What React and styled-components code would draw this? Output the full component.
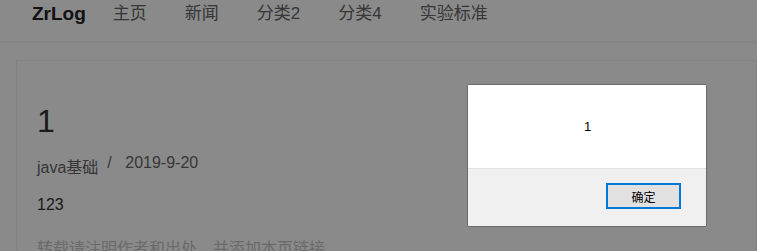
import React from "react";
import styled, { createGlobalStyle } from "styled-components";

const GlobalStyle = createGlobalStyle`
  html, body {
    margin: 0;
    padding: 0;
    background: #fff;
    font-family: "Liberation Sans", "Noto Sans CJK SC", Arial, sans-serif;
    overflow: hidden;
  }
`;

const Page = styled.div`
  width: 757px;
  height: 251px;
  position: relative;
  overflow: hidden;
`;

const Header = styled.header`
  height: 42px;
  box-sizing: border-box;
  display: flex;
  align-items: flex-start;
  padding: 4px 0 0 32px;
  line-height: 20px;
  border-bottom: 1px solid #f2f2f2;
  box-shadow: 0 1px 2px rgba(0, 0, 0, 0.05);
`;

const Brand = styled.a`
  font-size: 19px;
  font-weight: bold;
  color: #222;
  margin-right: 8px;
  text-decoration: none;
`;

const NavItem = styled.a`
  font-size: 17px;
  color: #666;
  padding: 0 19px;
  text-decoration: none;
`;

const Card = styled.article`
  margin: 18px 0 0 16px;
  border: 1px solid #f0f0f0;
  padding: 40px 20px 0 20px;
  height: 300px;
`;

const Title = styled.h1`
  margin: 0;
  font-size: 32px;
  font-weight: normal;
  color: #333;
  line-height: 40px;
`;

const Meta = styled.div`
  margin-top: 13px;
  font-size: 16px;
  color: #666;
  display: flex;
  gap: 9px;
`;

const Body = styled.p`
  margin: 18px 0 0;
  font-size: 16px;
  color: #333;
`;

const Notice = styled.p`
  margin: 21px 0 0;
  font-size: 16px;
  color: #c4c4c4;
`;

const Mask = styled.div`
  position: fixed;
  inset: 0;
  background: rgba(0, 0, 0, 0.46);
`;

const Dialog = styled.div`
  position: fixed;
  left: 467px;
  top: 84px;
  width: 240px;
  height: 143px;
  background: #f0f0f0;
  border: 1px solid #6b6b6b;
  border-radius: 2px;
  display: flex;
  flex-direction: column;
  box-sizing: border-box;
  overflow: hidden;
`;

const Message = styled.div`
  height: 83px;
  background: #fff;
  border-bottom: 1px solid #e2e2e2;
  display: flex;
  align-items: center;
  justify-content: center;
  font-size: 13px;
  color: #000;
  padding-left: 1px;
`;

const Actions = styled.div`
  flex: 1;
  display: flex;
  justify-content: flex-end;
  align-items: flex-start;
  padding: 14px 25px 0 0;
`;

const OkButton = styled.button`
  width: 75px;
  height: 26px;
  box-sizing: border-box;
  border: 2px solid #0078d7;
  background: #e1e1e1;
  font-family: "Noto Sans CJK SC", sans-serif;
  font-size: 12px;
  color: #000;
  padding: 0;
`;

export default function App() {
  const nav = ["主页", "新闻", "分类2", "分类4", "实验标准"];
  return (
    <>
      <GlobalStyle />
      <Page>
        <Header>
          <Brand>ZrLog</Brand>
          {nav.map((n) => (
            <NavItem key={n}>{n}</NavItem>
          ))}
        </Header>
        <Card>
          <Title>1</Title>
          <Meta>
            <span>java基础</span>
            <span>/</span>
            <span>&nbsp;2019-9-20</span>
          </Meta>
          <Body>123</Body>
          <Notice>转载请注明作者和出处，并添加本页链接</Notice>
        </Card>
        <Mask />
        <Dialog>
          <Message>1</Message>
          <Actions>
            <OkButton>确定</OkButton>
          </Actions>
        </Dialog>
      </Page>
    </>
  );
}
